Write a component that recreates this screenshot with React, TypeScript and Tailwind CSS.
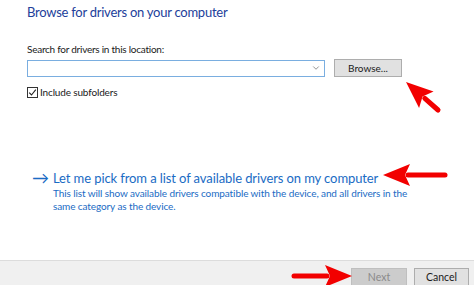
import { ChevronDown } from "lucide-react";

const font = { fontFamily: 'Lato, "Noto Sans", sans-serif' };

function RedArrow({ x1, y1, x2, y2 }: { x1: number; y1: number; x2: number; y2: number }) {
  // arrow drawn from tail (x1,y1) to tip (x2,y2)
  const dx = x2 - x1;
  const dy = y2 - y1;
  const len = Math.hypot(dx, dy);
  const ux = dx / len;
  const uy = dy / len;
  const head = 27;
  const half = 11;
  const bx = x2 - ux * head;
  const by = y2 - uy * head;
  const px = -uy;
  const py = ux;
  return (
    <g>
      <line x1={x1} y1={y1} x2={bx + ux * 2} y2={by + uy * 2} stroke="#f20000" strokeWidth={5} strokeLinecap="round" />
      <polygon
        points={`${x2},${y2} ${bx + px * half},${by + py * half} ${bx + ux * 5},${by + uy * 5} ${bx - px * half},${by - py * half}`}
        fill="#f20000"
      />
    </g>
  );
}

export default function App() {
  return (
    <div className="relative w-[474px] h-[285px] bg-white overflow-hidden flex flex-col" style={font}>
      <div className="flex-1 pl-[27px] pt-[2px]">
        <h1 className="text-[13px] leading-[20px] tracking-[-0.25px] text-[#22409a] font-normal">
          Browse for drivers on your computer
        </h1>

        <div className="mt-[20px] text-[10px] leading-[14px] tracking-[-0.25px] text-[#1a1a1a]">
          Search for drivers in this location:
        </div>

        <div className="mt-[3px] flex items-center gap-[9px]">
          <div className="w-[298px] h-[17px] border border-[#7aaee0] bg-white flex items-center justify-end pr-[3px]">
            <ChevronDown size={10} strokeWidth={1.5} className="text-[#555]" />
          </div>
          <button className="w-[68px] h-[18px] bg-[#e1e1e1] border border-[#adadad] text-[10px] leading-none text-[#1a1a1a]">
            Browse...
          </button>
        </div>

        <label className="mt-[8px] flex items-center gap-[2px] text-[10px] leading-[14px] tracking-[-0.15px] text-[#1a1a1a]">
          <span className="w-[11px] h-[11px] border border-[#333] flex items-center justify-center">
            <svg width="9" height="9" viewBox="0 0 9 9">
              <path d="M1.2 4.6 L3.5 7 L7.8 1.6" fill="none" stroke="#222" strokeWidth="1.1" />
            </svg>
          </span>
          Include subfolders
        </label>

        <div className="mt-[70px] flex items-start">
          <span className="w-[26px] text-[17px] leading-[18px] text-[#1a6bc4] pl-[5px]">→</span>
          <div>
            <div className="text-[13px] leading-[18px] tracking-[-0.1px] text-[#1a6bc4]">
              Let me pick from a list of available drivers on my computer
            </div>
            <div className="text-[10px] leading-[13px] tracking-[-0.1px] text-[#1a6bc4] w-[358px]">
              This list will show available drivers compatible with the device, and all drivers in the same category as
              the device.
            </div>
          </div>
        </div>
      </div>

      <div className="h-[25px] border-t border-[#dcdcdc] bg-[#f0f0f0] flex justify-end items-start pt-[7px] pr-[5px] gap-[7px]">
        <button className="w-[56px] h-[20px] bg-[#cccccc] border border-[#bfbfbf] text-[10.5px] text-[#8a8a8a]">Next</button>
        <button className="w-[55px] h-[20px] bg-[#e1e1e1] border border-[#adadad] text-[10.5px] text-[#1a1a1a]">Cancel</button>
      </div>

      <svg className="absolute inset-0 pointer-events-none" width="474" height="285">
        <RedArrow x1={438} y1={110} x2={406} y2={82} />
        <RedArrow x1={445} y1={175} x2={383} y2={175} />
        <RedArrow x1={294} y1={276} x2={352} y2={276} />
      </svg>
    </div>
  );
}
